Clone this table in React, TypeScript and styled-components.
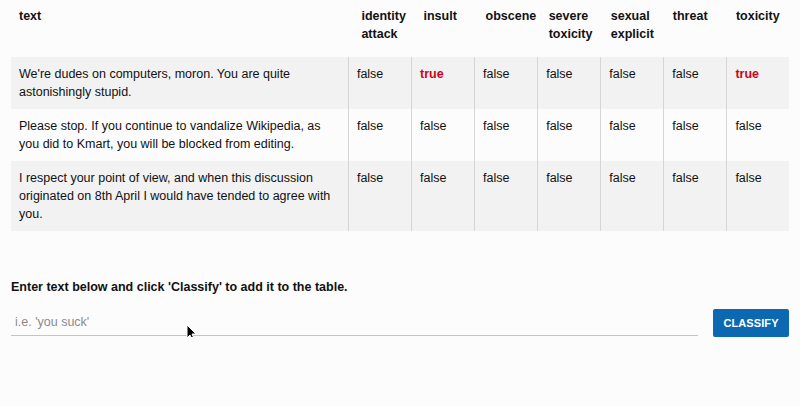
import React from "react";
import styled, { createGlobalStyle } from "styled-components";

const GlobalStyle = createGlobalStyle`
  html, body {
    margin: 0;
    padding: 0;
    background: #fdfcfd;
    font-family: "Liberation Sans", Arial, Helvetica, sans-serif;
    color: #111;
  }
`;

const Page = styled.div`
  position: relative;
  padding: 0 11px;
  width: 800px;
  box-sizing: border-box;
`;

const Table = styled.table`
  width: 778px;
  border-collapse: collapse;
  table-layout: fixed;
  font-size: 12.5px;
  line-height: 18px;
`;

const HeadCell = styled.th<{ $pad: number }>`
  text-align: left;
  vertical-align: top;
  font-weight: bold;
  padding: 7px 2px 14px ${(p) => p.$pad}px;
`;

const Row = styled.tr<{ $shaded: boolean }>`
  background: ${(p) => (p.$shaded ? "#f2f2f2" : "transparent")};
`;

const TextCell = styled.td`
  vertical-align: top;
  padding: 8px 8px;
`;

const ValueCell = styled.td<{ $hit: boolean }>`
  vertical-align: top;
  padding: 8px 8px;
  border-left: 1.5px solid #d6d6d6;
  color: ${(p) => (p.$hit ? "#d0021b" : "#111")};
  font-weight: ${(p) => (p.$hit ? "bold" : "normal")};
`;

const Prompt = styled.div`
  margin-top: 47px;
  font-size: 12.5px;
  line-height: 18px;
  font-weight: bold;
`;

const FormRow = styled.div`
  margin-top: 13px;
  display: flex;
  align-items: flex-end;
  gap: 15px;
`;

const Input = styled.input`
  flex: 1;
  height: 26px;
  border: none;
  border-bottom: 1px solid #c4c4c4;
  background: transparent;
  font-family: "Liberation Sans", Arial, sans-serif;
  font-size: 12.5px;
  padding: 0 0 0 4px;
  margin-bottom: 1px;
  outline: none;
  &::placeholder {
    color: #8a8a8a;
  }
`;

const Button = styled.button`
  width: 76px;
  height: 28px;
  background: #0c69b1;
  color: #fff;
  border: none;
  border-radius: 2px;
  font-family: "Liberation Sans", Arial, sans-serif;
  font-weight: bold;
  font-size: 11px;
  letter-spacing: 0.1px;
  padding: 0;
`;

const Cursor = styled.svg`
  position: absolute;
  left: 186px;
  top: 324px;
`;

const columns: { label: string[]; pad: number }[] = [
  { label: ["identity", "attack"], pad: 13 },
  { label: ["insult"], pad: 12 },
  { label: ["obscene"], pad: 11 },
  { label: ["severe", "toxicity"], pad: 11 },
  { label: ["sexual", "explicit"], pad: 10 },
  { label: ["threat"], pad: 9 },
  { label: ["toxicity"], pad: 9 },
];

const rows: { text: string; values: boolean[] }[] = [
  {
    text: "We're dudes on computers, moron. You are quite astonishingly stupid.",
    values: [false, true, false, false, false, false, true],
  },
  {
    text: "Please stop. If you continue to vandalize Wikipedia, as you did to Kmart, you will be blocked from editing.",
    values: [false, false, false, false, false, false, false],
  },
  {
    text: "I respect your point of view, and when this discussion originated on 8th April I would have tended to agree with you.",
    values: [false, false, false, false, false, false, false],
  },
];

export default function App() {
  return (
    <Page>
      <GlobalStyle />
      <Table>
        <colgroup>
          <col style={{ width: 337 }} />
          {columns.map((_, i) => (
            <col key={i} style={{ width: i === 6 ? 62 : 63 }} />
          ))}
        </colgroup>
        <thead>
          <tr>
            <HeadCell $pad={8}>text</HeadCell>
            {columns.map((c, i) => (
              <HeadCell key={i} $pad={c.pad}>
                {c.label.map((w, j) => (
                  <React.Fragment key={j}>
                    {j > 0 && <br />}
                    {w}
                  </React.Fragment>
                ))}
              </HeadCell>
            ))}
          </tr>
        </thead>
        <tbody>
          {rows.map((r, i) => (
            <Row key={i} $shaded={i % 2 === 0}>
              <TextCell>{r.text}</TextCell>
              {r.values.map((v, j) => (
                <ValueCell key={j} $hit={v}>
                  {v ? "true" : "false"}
                </ValueCell>
              ))}
            </Row>
          ))}
        </tbody>
      </Table>
      <Prompt>Enter text below and click 'Classify' to add it to the table.</Prompt>
      <FormRow>
        <Input placeholder="i.e. 'you suck'" />
        <Button>CLASSIFY</Button>
      </FormRow>
      <Cursor width="12" height="18" viewBox="0 0 12 18">
        <path
          d="M1 1 L1 14 L4 11 L6.5 16.5 L8.5 15.5 L6 10 L10 10 Z"
          fill="#000"
          stroke="#fff"
          strokeWidth="1"
        />
      </Cursor>
    </Page>
  );
}
